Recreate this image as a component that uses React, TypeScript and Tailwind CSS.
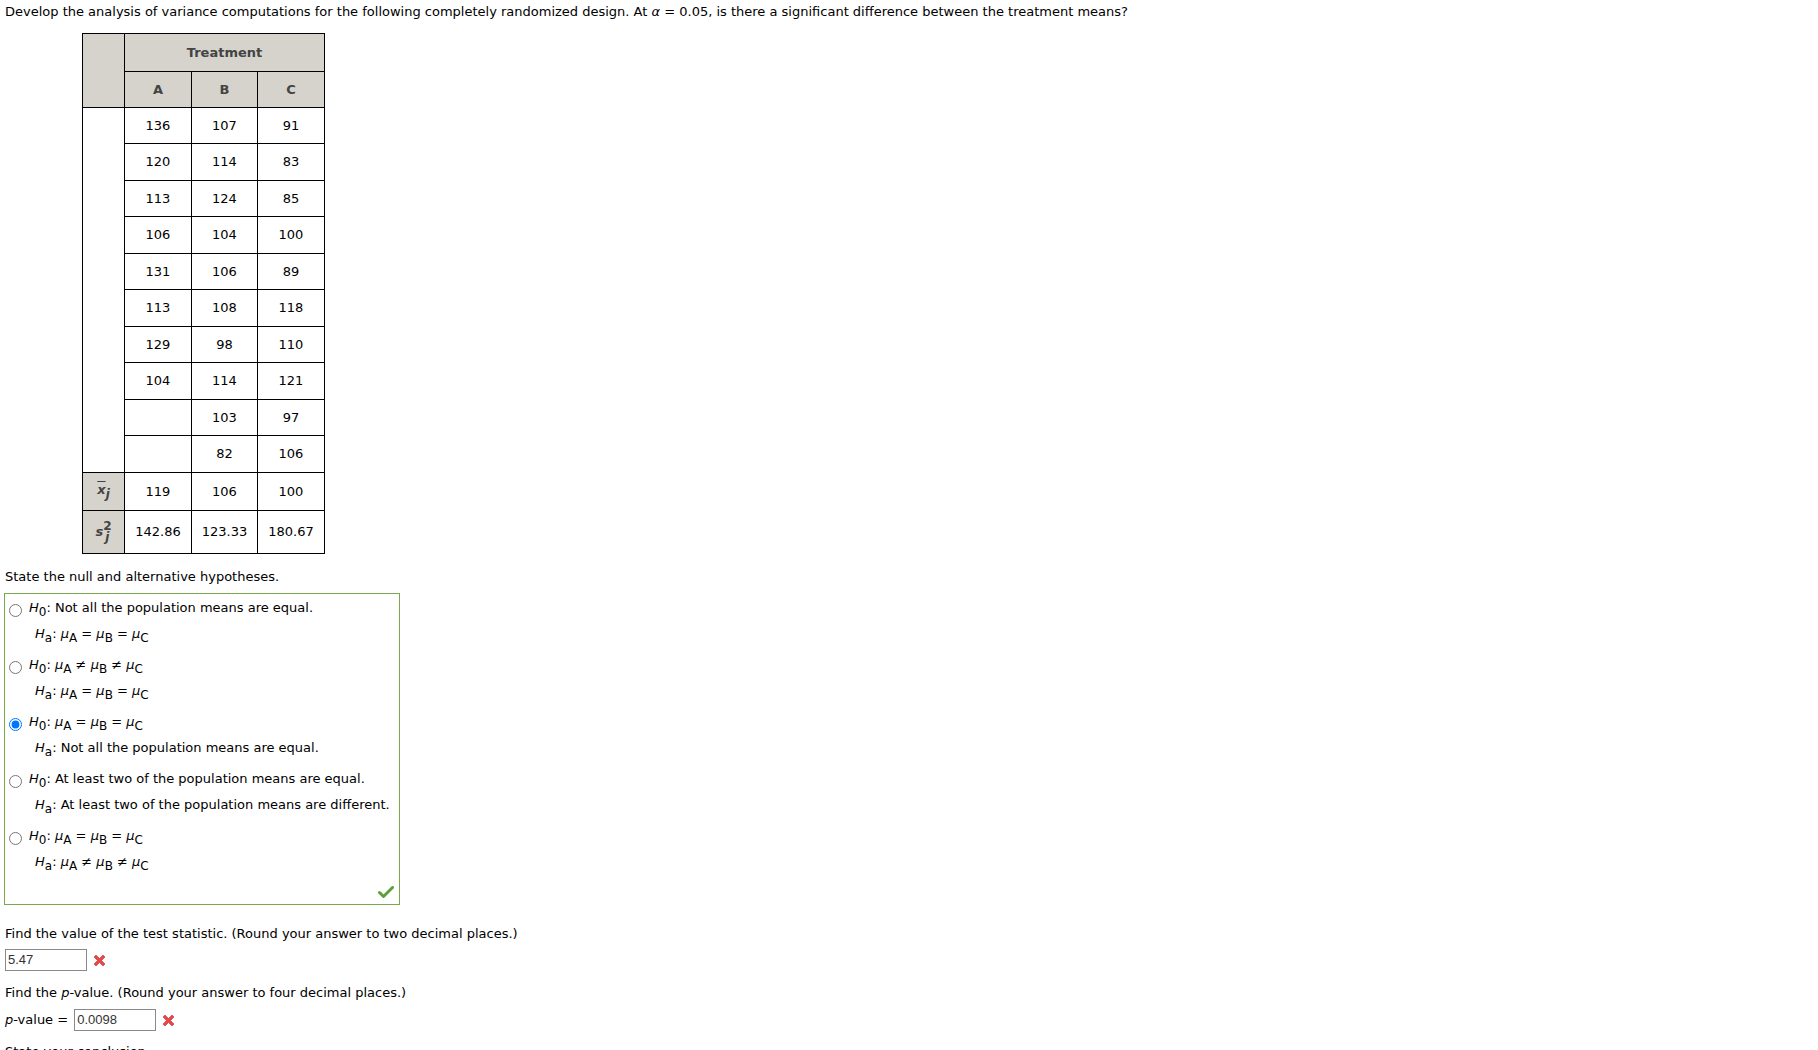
import React from "react";

const rows: (number | string)[][] = [
  [136, 107, 91],
  [120, 114, 83],
  [113, 124, 85],
  [106, 104, 100],
  [131, 106, 89],
  [113, 108, 118],
  [129, 98, 110],
  [104, 114, 121],
  ["", 103, 97],
  ["", 82, 106],
];

const rowHeights = [
  "h-[36px]",
  "h-[37px]",
  "h-[36px]",
  "h-[37px]",
  "h-[36px]",
  "h-[37px]",
  "h-[36px]",
  "h-[37px]",
  "h-[36px]",
  "h-[37px]",
];

function Sym({ base, sub }: { base: string; sub: string }) {
  return (
    <>
      <i>{base}</i>
      <span className="text-[12px] align-[-4px]">{sub}</span>
    </>
  );
}

function Means({ op }: { op: string }) {
  return (
    <>
      <Sym base="μ" sub="A" /> {op} <Sym base="μ" sub="B" /> {op}{" "}
      <Sym base="μ" sub="C" />
    </>
  );
}

type Option = {
  h0: React.ReactNode;
  ha: React.ReactNode;
  checked?: boolean;
};

const options: Option[] = [
  { h0: "Not all the population means are equal.", ha: <Means op="=" /> },
  { h0: <Means op="≠" />, ha: <Means op="=" /> },
  {
    h0: <Means op="=" />,
    ha: "Not all the population means are equal.",
    checked: true,
  },
  {
    h0: "At least two of the population means are equal.",
    ha: "At least two of the population means are different.",
  },
  { h0: <Means op="=" />, ha: <Means op="≠" /> },
];

function RedX() {
  return (
    <svg width="13" height="13" viewBox="0 0 13 13" className="shrink-0">
      <path
        d="M1 3 L3 1 L6.5 4.5 L10 1 L12 3 L8.5 6.5 L12 10 L10 12 L6.5 8.5 L3 12 L1 10 L4.5 6.5 Z"
        fill="#e8474a"
        stroke="#c23434"
        strokeWidth="0.6"
        strokeLinejoin="round"
      />
    </svg>
  );
}

function Check() {
  return (
    <svg width="16" height="12" viewBox="0 0 16 12">
      <path
        d="M1.5 6.5 L5.5 10.5 L14.5 1.5"
        fill="none"
        stroke="#5da03a"
        strokeWidth="3"
        strokeLinecap="round"
        strokeLinejoin="round"
      />
    </svg>
  );
}

export default function App() {
  const cell = "border border-black text-center p-0";
  const head = "border border-black text-center p-0 bg-[#d6d3cc] font-bold text-[#444]";

  return (
    <div className="min-h-screen bg-white px-[4px] pt-[4px] text-[13px] leading-[16px] text-black font-['DejaVu_Sans',Verdana,sans-serif]">
      <p className="ml-[1px]">
        Develop the analysis of variance computations for the following
        completely randomized design. At <i>α</i> = 0.05, is there a
        significant difference between the treatment means?
      </p>

      <table className="ml-[78px] mt-[13px] w-[242px] table-fixed border-collapse">
        <colgroup>
          <col className="w-[42px]" />
          <col className="w-[67px]" />
          <col className="w-[66px]" />
          <col className="w-[67px]" />
        </colgroup>
        <tbody>
          <tr className="h-[38px]">
            <td rowSpan={2} className={head}></td>
            <td colSpan={3} className={head}>
              Treatment
            </td>
          </tr>
          <tr className="h-[36px]">
            <td className={head}>A</td>
            <td className={head}>B</td>
            <td className={head}>C</td>
          </tr>
          {rows.map((r, i) => (
            <tr key={i} className={rowHeights[i]}>
              {i === 0 && <td rowSpan={10} className={cell}></td>}
              {r.map((v, j) => (
                <td key={j} className={cell}>
                  {v}
                </td>
              ))}
            </tr>
          ))}
          <tr className="h-[38px]">
            <td className={head}>
              <i className="overline">x</i>
              <i className="text-[12px] align-[-4px]">j</i>
            </td>
            <td className={cell}>119</td>
            <td className={cell}>106</td>
            <td className={cell}>100</td>
          </tr>
          <tr className="h-[43px]">
            <td className={head}>
              <span className="inline-flex items-center">
                <i>s</i>
                <span className="inline-flex flex-col text-[12px] leading-[11px] not-italic">
                  <span>2</span>
                  <i>j</i>
                </span>
              </span>
            </td>
            <td className={cell}>142.86</td>
            <td className={cell}>123.33</td>
            <td className={cell}>180.67</td>
          </tr>
        </tbody>
      </table>

      <p className="ml-[1px] mt-[15px]">State the null and alternative hypotheses.</p>

      <div className="mt-[8px] w-[396px] border border-[#7aa84a] pt-[3px]">
        {options.map((o, i) => (
          <div key={i} className="mb-[5px]">
            <div className="flex h-[26px] items-center">
              <input
                type="radio"
                name="hyp"
                defaultChecked={o.checked}
                className="m-0 ml-[4px] h-[13px] w-[13px]"
              />
              <span className="ml-[7px] whitespace-nowrap">
                <Sym base="H" sub="0" />: {o.h0}
              </span>
            </div>
            <div className="flex h-[26px] items-center pl-[30px]">
              <span className="whitespace-nowrap">
                <Sym base="H" sub="a" />: {o.ha}
              </span>
            </div>
          </div>
        ))}
        <div className="flex h-[22px] items-start justify-end pr-[5px] pt-[4px]">
          <Check />
        </div>
      </div>

      <p className="ml-[1px] mt-[21px]">
        Find the value of the test statistic. (Round your answer to two
        decimal places.)
      </p>
      <div className="mt-[7px] flex items-center gap-[6px]">
        <div className="ml-[1px] flex h-[22px] w-[82px] items-center border border-[#8a8a8a] px-[2px] text-[13px] text-[#333] font-['Liberation_Sans',Arial,sans-serif]">
          5.47
        </div>
        <RedX />
      </div>

      <p className="ml-[1px] mt-[14px]">
        Find the <i>p</i>-value. (Round your answer to four decimal places.)
      </p>
      <div className="mt-[8px] ml-[1px] flex items-center gap-[6px]">
        <span>
          <i>p</i>-value =
        </span>
        <div className="flex h-[22px] w-[82px] items-center border border-[#8a8a8a] px-[2px] text-[13px] text-[#333] font-['Liberation_Sans',Arial,sans-serif]">
          0.0098
        </div>
        <RedX />
      </div>

      <p className="ml-[1px] mt-[13px]">State your conclusion.</p>
    </div>
  );
}
